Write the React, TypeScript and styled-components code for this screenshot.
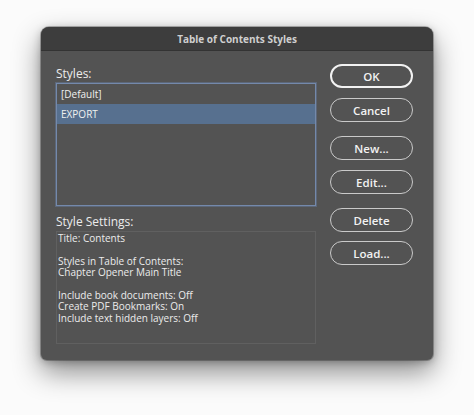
import React from 'react'
import styled, { createGlobalStyle } from 'styled-components'

const GlobalStyle = createGlobalStyle`
  html, body {
    margin: 0;
    padding: 0;
    background: #fbfbfb;
  }

  body {
    font-family: 'Open Sans', 'DejaVu Sans', sans-serif;
  }
`

const Page = styled.div`
  width: 474px;
  height: 415px;
  padding: 27px 0 0 41px;
  box-sizing: border-box;
`

const Dialog = styled.div`
  width: 392px;
  height: 333px;
  display: flex;
  flex-direction: column;
  border-radius: 8px 8px 6px 6px;
  overflow: hidden;
  background: #535353;
  box-shadow: 0 0 0 1px rgba(0, 0, 0, 0.25), 0 12px 28px rgba(0, 0, 0, 0.45),
    0 2px 8px rgba(0, 0, 0, 0.25);
`

const TitleBar = styled.div`
  height: 23px;
  flex-shrink: 0;
  display: flex;
  align-items: center;
  justify-content: center;
  background: #3d3d3d;
  border-bottom: 1px solid #333;
  color: #cfcfcf;
  font-size: 10px;
  font-weight: 700;
`

const Body = styled.div`
  flex: 1;
  display: flex;
  gap: 14px;
  padding: 0 20px 0 15px;
`

const LeftColumn = styled.div`
  width: 260px;
  display: flex;
  flex-direction: column;
  padding-top: 15px;
`

const Label = styled.div<{ $gap?: number }>`
  height: 16px;
  line-height: 16px;
  margin-top: ${p => p.$gap ?? 0}px;
  margin-bottom: 1px;
  color: #ececec;
  font-size: 12px;
`

const StyleList = styled.div`
  height: 123px;
  box-sizing: border-box;
  border: 1px solid #7489ab;
  box-shadow: 0 0 0 1px #5c6779;
  background: #535353;
`

const ListRow = styled.div<{ $selected?: boolean }>`
  height: 20px;
  line-height: 20px;
  padding-left: 4px;
  color: #f0f0f0;
  font-size: 10px;
  background: ${p => (p.$selected ? '#57708f' : 'transparent')};
`

const SettingsBox = styled.div`
  height: 113px;
  box-sizing: border-box;
  border: 1px solid #606060;
  padding: 1px 0 0 1px;
  color: #ececec;
  font-size: 10px;
  line-height: 11.4px;
  white-space: pre-line;
`

const ButtonColumn = styled.div`
  width: 83px;
  display: flex;
  flex-direction: column;
  padding-top: 13px;
`

const Button = styled.button<{ $primary?: boolean; $gap: number }>`
  height: 24px;
  margin-top: ${p => p.$gap}px;
  border-radius: 12px;
  border: ${p => (p.$primary ? '2px solid #f2f2f2' : '1px solid #cacaca')};
  background: transparent;
  color: #f2f2f2;
  font-family: 'Open Sans', 'DejaVu Sans', sans-serif;
  font-size: 11.5px;
  font-weight: 600;
  padding: 0;
`

const settings = `Title: Contents

Styles in Table of Contents:
Chapter Opener Main Title

Include book documents: Off
Create PDF Bookmarks: On
Include text hidden layers: Off`

const buttons = [
  { label: 'OK', gap: 0, primary: true },
  { label: 'Cancel', gap: 10 },
  { label: 'New...', gap: 14 },
  { label: 'Edit...', gap: 10 },
  { label: 'Delete', gap: 14 },
  { label: 'Load...', gap: 9 }
]

export default function App() {
  return (
    <>
      <GlobalStyle />
      <Page>
        <Dialog>
          <TitleBar>Table of Contents Styles</TitleBar>
          <Body>
            <LeftColumn>
              <Label>Styles:</Label>
              <StyleList>
                <ListRow>[Default]</ListRow>
                <ListRow $selected>EXPORT</ListRow>
              </StyleList>
              <Label $gap={8}>Style Settings:</Label>
              <SettingsBox>{settings}</SettingsBox>
            </LeftColumn>
            <ButtonColumn>
              {buttons.map(b => (
                <Button key={b.label} $primary={b.primary} $gap={b.gap}>
                  {b.label}
                </Button>
              ))}
            </ButtonColumn>
          </Body>
        </Dialog>
      </Page>
    </>
  )
}
